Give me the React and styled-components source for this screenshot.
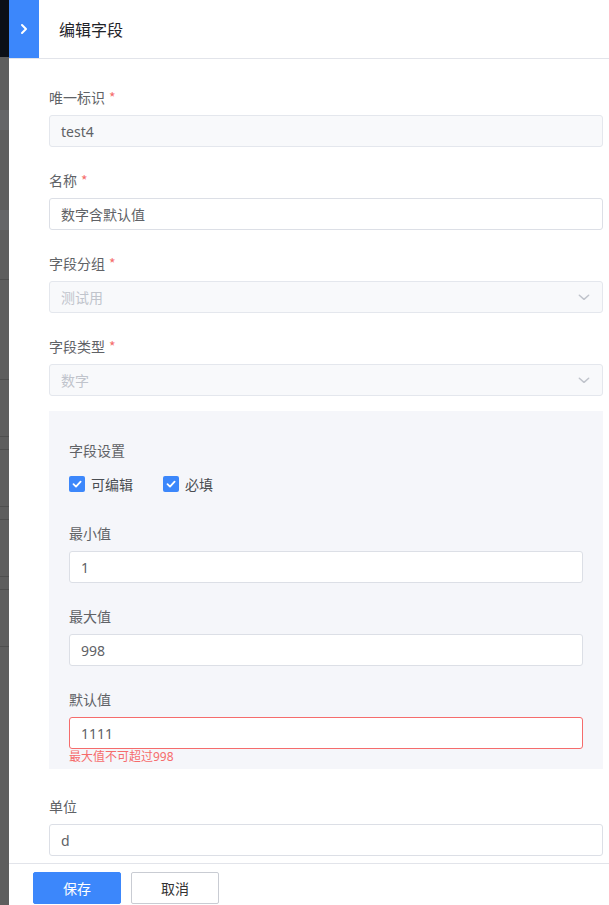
import React from 'react';
import styled, { createGlobalStyle } from 'styled-components';

const GlobalStyle = createGlobalStyle`
  html, body { margin: 0; padding: 0; height: 100%; }
  body {
    font-family: "Noto Sans", "Noto Sans CJK SC", sans-serif;
    color: #606266;
    overflow: hidden;
  }
  #root { height: 100%; }
`;

const BLUE = '#3c87fb';

// STYLES
const Page = styled.div`
  display: flex;
  height: 100vh;
  width: 100vw;
`;

const Backdrop = styled.div`
  width: 9px;
  flex-shrink: 0;
  display: flex;
  flex-direction: column;
  background: #5e5e5e;
`;

const Strip = styled.div`
  height: ${p => p.h}px;
  flex-shrink: 0;
  background: ${p => (p.tone === 'dark' ? '#0b0f17' : p.tone === 'light' ? '#656668' : '#5e5e5e')};
  border-bottom: ${p => (p.line ? '1px solid #4f4f4f' : 'none')};
`;

const Drawer = styled.div`
  flex: 1;
  display: flex;
  flex-direction: column;
  background: #fff;
  min-width: 0;
`;

const Header = styled.div`
  height: 59px;
  flex-shrink: 0;
  display: flex;
  align-items: flex-start;
  border-bottom: 1px solid #e2e4ea;
  box-sizing: border-box;
`;

const Tab = styled.div`
  width: 30px;
  height: 58px;
  background: ${BLUE};
  display: flex;
  align-items: center;
  justify-content: center;
`;

const Title = styled.div`
  margin-left: 20px;
  line-height: 58px;
  font-size: 16px;
  color: #1f2329;
  font-family: "Noto Sans CJK SC", sans-serif;
`;

const Body = styled.div`
  flex: 1;
  overflow: hidden;
  padding: 27px 6px 0 40px;
`;

const Field = styled.div`
  margin-bottom: ${p => (p.last ? 0 : 22)}px;
`;

const Label = styled.div`
  height: 22px;
  line-height: 22px;
  font-size: 14px;
  color: #606266;
  margin-bottom: 7px;
  font-family: "Noto Sans CJK SC", sans-serif;
`;

const Star = styled.span`
  color: #f56c6c;
  margin-left: 4px;
`;

const Input = styled.div`
  height: 32px;
  box-sizing: border-box;
  display: flex;
  align-items: center;
  padding: 0 11px;
  border: 1px solid ${p => (p.error ? '#f56c6c' : p.disabled || p.readonly ? '#e4e7ed' : '#dcdfe6')};
  border-radius: 3px;
  background: ${p => (p.disabled || p.readonly ? '#f8f9fb' : '#fff')};
  color: ${p => (p.disabled ? '#c0c4cc' : '#606266')};
  font-size: 14px;
  font-family: "Noto Sans", "Noto Sans CJK SC", sans-serif;
`;

const Value = styled.span`
  flex: 1;
`;

const Settings = styled.div`
  margin: -7px 0 26px;
  background: #f5f6fa;
  padding: 28px 20px 4px;
`;

const CheckRow = styled.div`
  display: flex;
  gap: 30px;
  height: 22px;
  margin: 12px 0 27px;
`;

const Check = styled.label`
  display: flex;
  align-items: center;
  gap: 6px;
  font-size: 14px;
  color: #4a4d52;
  font-family: "Noto Sans CJK SC", sans-serif;
`;

const Box = styled.span`
  width: 16px;
  height: 16px;
  border-radius: 2px;
  background: ${BLUE};
  display: flex;
  align-items: center;
  justify-content: center;
`;

const ErrorText = styled.div`
  font-size: 12px;
  line-height: 16px;
  color: #f56c6c;
  font-family: "Noto Sans", "Noto Sans CJK SC", sans-serif;
`;

const Footer = styled.div`
  flex-shrink: 0;
  border-top: 1px solid #e2e4ea;
  padding: 8px 24px 1px;
  display: flex;
  gap: 10px;
`;

const Button = styled.button`
  width: 88px;
  height: 32px;
  border-radius: 2px;
  font-size: 14px;
  font-family: "Noto Sans CJK SC", sans-serif;
  border: 1px solid ${p => (p.primary ? BLUE : '#c9ccd3')};
  background: ${p => (p.primary ? BLUE : '#fff')};
  color: ${p => (p.primary ? '#fff' : '#333')};
  cursor: pointer;
`;

const strips = [
  { h: 57, tone: 'dark' },
  { h: 53 },
  { h: 20, tone: 'light' },
  { h: 80 },
  { h: 20, tone: 'light' },
  { h: 49, line: true },
  { h: 99, line: true },
  { h: 56, line: true },
  { h: 12, line: true },
  { h: 56, line: true },
  { h: 12, line: true },
  { h: 56, line: true },
  { h: 12, line: true },
  { h: 56, line: true },
  { h: 300 },
];

function Chevron({ dir, color, size }) {
  return dir === 'right' ? (
    <svg width={size} height={size} viewBox="0 0 12 12">
      <path d="M4 2 L8 6 L4 10" fill="none" stroke={color} strokeWidth="2" strokeLinecap="round" strokeLinejoin="round" />
    </svg>
  ) : (
    <svg width={size} height={size} viewBox="0 0 12 12">
      <path d="M2 4.5 L6 8 L10 4.5" fill="none" stroke={color} strokeWidth="1.3" strokeLinecap="round" strokeLinejoin="round" />
    </svg>
  );
}

function Tick() {
  return (
    <svg width="12" height="12" viewBox="0 0 12 12">
      <path d="M2.5 6.2 L5 8.6 L9.6 3.6" fill="none" stroke="#fff" strokeWidth="1.8" strokeLinecap="round" strokeLinejoin="round" />
    </svg>
  );
}

function FormField({ label, required, value, disabled, readonly, select, error, last }) {
  return (
    <Field last={last}>
      <Label>
        {label}
        {required && <Star>*</Star>}
      </Label>
      <Input disabled={disabled} readonly={readonly} error={error}>
        <Value>{value}</Value>
        {select && <Chevron dir="down" color="#c0c4cc" size={14} />}
      </Input>
    </Field>
  );
}

function App() {
  return (
    <Page>
      <GlobalStyle />
      <Backdrop>
        {strips.map((s, i) => (
          <Strip key={i} h={s.h} tone={s.tone} line={s.line} />
        ))}
      </Backdrop>
      <Drawer>
        <Header>
          <Tab>
            <Chevron dir="right" color="#fff" size={12} />
          </Tab>
          <Title>编辑字段</Title>
        </Header>
        <Body>
          <FormField label="唯一标识" required value="test4" readonly />
          <FormField label="名称" required value="数字含默认值" />
          <FormField label="字段分组" required value="测试用" disabled select />
          <FormField label="字段类型" required value="数字" disabled select />
          <Settings>
            <Label>字段设置</Label>
            <CheckRow>
              <Check>
                <Box><Tick /></Box>
                可编辑
              </Check>
              <Check>
                <Box><Tick /></Box>
                必填
              </Check>
            </CheckRow>
            <FormField label="最小值" value="1" />
            <FormField label="最大值" value="998" />
            <Field last>
              <Label>默认值</Label>
              <Input error>
                <Value>1111</Value>
              </Input>
              <ErrorText>最大值不可超过998</ErrorText>
            </Field>
          </Settings>
          <FormField label="单位" value="d" last />
        </Body>
        <Footer>
          <Button primary>保存</Button>
          <Button>取消</Button>
        </Footer>
      </Drawer>
    </Page>
  );
}

export default App;
